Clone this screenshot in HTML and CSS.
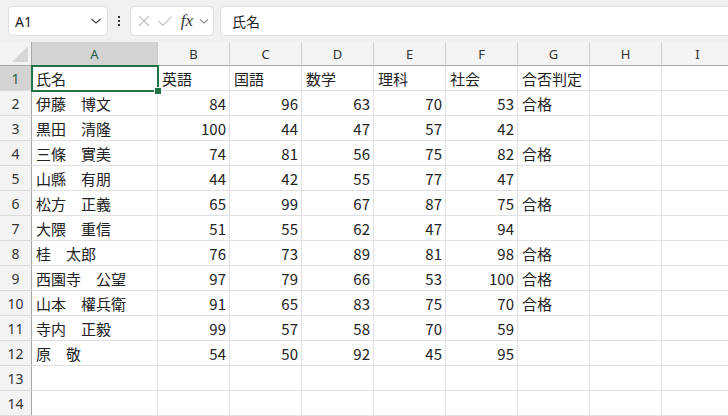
FILE: index.html
```html
<!DOCTYPE html>
<html lang="ja">

<head>
    <meta charset="UTF-8">
    <title>成績表</title>
    <link rel="stylesheet" href="styles.css">
</head>

<body>
    <!-- 数式バー -->
    <div class="formula-bar">
        <div class="name-box">
            <span>A1</span>
            <svg width="12" height="8" viewBox="0 0 12 8"><path d="M1.5 2 L6 6 L10.5 2" fill="none" stroke="#444" stroke-width="1.3"/></svg>
        </div>
        <div class="dots">
            <span></span><span></span><span></span>
        </div>
        <div class="fx-box">
            <svg width="14" height="14" viewBox="0 0 14 14"><path d="M2 2 L12 12 M12 2 L2 12" stroke="#c4c4c4" stroke-width="1.2"/></svg>
            <svg width="16" height="14" viewBox="0 0 16 14"><path d="M1.5 7 L6 11.5 L14.5 2.5" fill="none" stroke="#c4c4c4" stroke-width="1.2"/></svg>
            <span class="fx">fx</span>
            <svg width="10" height="7" viewBox="0 0 10 7"><path d="M1 1.5 L5 5 L9 1.5" fill="none" stroke="#888" stroke-width="1.1"/></svg>
        </div>
        <div class="formula-input">氏名</div>
    </div>

    <!-- シート -->
    <div class="sheet" id="sheet">
        <div class="corner"><div class="tri"></div></div>
    </div>

    <script>
        const cols = ['A', 'B', 'C', 'D', 'E', 'F', 'G', 'H', 'I'];
        const rows = [
            ['氏名', '英語', '国語', '数学', '理科', '社会', '合否判定'],
            ['伊藤　博文', 84, 96, 63, 70, 53, '合格'],
            ['黒田　清隆', 100, 44, 47, 57, 42, ''],
            ['三條　實美', 74, 81, 56, 75, 82, '合格'],
            ['山縣　有朋', 44, 42, 55, 77, 47, ''],
            ['松方　正義', 65, 99, 67, 87, 75, '合格'],
            ['大隈　重信', 51, 55, 62, 47, 94, ''],
            ['桂　太郎', 76, 73, 89, 81, 98, '合格'],
            ['西園寺　公望', 97, 79, 66, 53, 100, '合格'],
            ['山本　權兵衛', 91, 65, 83, 75, 70, '合格'],
            ['寺内　正毅', 99, 57, 58, 70, 59, ''],
            ['原　敬', 54, 50, 92, 45, 95, ''],
            [],
            []
        ];

        const sheet = document.getElementById('sheet');

        cols.forEach(c => {
            const h = document.createElement('div');
            h.className = 'col-head' + (c === 'A' ? ' active' : '');
            h.textContent = c;
            sheet.appendChild(h);
        });

        rows.forEach((r, i) => {
            const rh = document.createElement('div');
            rh.className = 'row-head' + (i === 0 ? ' active' : '');
            rh.textContent = i + 1;
            sheet.appendChild(rh);
            for (let j = 0; j < cols.length; j++) {
                const cell = document.createElement('div');
                const v = r[j];
                cell.className = 'cell' + (typeof v === 'number' ? ' num' : '');
                cell.textContent = v === undefined ? '' : v;
                sheet.appendChild(cell);
            }
        });

        const sel = document.createElement('div');
        sel.className = 'selection';
        sel.innerHTML = '<div class="handle"></div>';
        sheet.appendChild(sel);
    </script>
</body>

</html>
```

FILE: styles.css
```css
html,
body {
    margin: 0;
    height: 100%;
    overflow: hidden;
    background: #fff;
    font-family: "Noto Sans CJK JP", "Noto Sans", sans-serif;
}

.formula-bar {
    height: 42px;
    background: #f0f0f0;
    display: flex;
    align-items: center;
    padding: 0 0 0 8px;
    box-sizing: border-box;
}

.name-box {
    width: 100px;
    height: 30px;
    background: #fff;
    border: 1px solid #e0e0e0;
    border-radius: 5px;
    box-sizing: border-box;
    display: flex;
    align-items: center;
    justify-content: space-between;
    padding: 0 5px 0 6px;
    font-family: "Noto Sans", sans-serif;
    font-size: 14px;
    color: #222;
}

.dots {
    width: 22px;
    display: flex;
    flex-direction: column;
    align-items: center;
    gap: 2px;
}

.dots span {
    width: 2px;
    height: 2px;
    background: #333;
}

.fx-box {
    width: 84px;
    height: 30px;
    background: #fff;
    border: 1px solid #e0e0e0;
    border-radius: 5px;
    box-sizing: border-box;
    display: flex;
    align-items: center;
    gap: 6px;
    padding: 0 4px 0 6px;
}

.fx {
    font-family: "Liberation Serif", serif;
    font-style: italic;
    font-size: 17px;
    color: #333;
    margin-left: 2px;
}

.formula-input {
    flex: 1;
    margin-left: 6px;
    height: 30px;
    background: #fff;
    border: 1px solid #e0e0e0;
    border-right: none;
    border-radius: 5px 0 0 5px;
    box-sizing: border-box;
    display: flex;
    align-items: center;
    padding-left: 11px;
    font-size: 14px;
    color: #222;
}

.sheet {
    position: relative;
    display: grid;
    grid-template-columns: 32px 126px repeat(8, 72px);
    grid-template-rows: 24px;
    grid-auto-rows: 25px;
    font-size: 15px;
    color: #222;
}

.corner {
    background: #f3f3f3;
    border-bottom: 1px solid #a8a8a8;
    border-right: 1px solid #a8a8a8;
    box-sizing: border-box;
    position: relative;
}

.tri {
    position: absolute;
    right: 3px;
    bottom: 3px;
    width: 0;
    height: 0;
    border-left: 16px solid transparent;
    border-bottom: 16px solid #d6d6d6;
}

.col-head {
    background: #f3f3f3;
    border-bottom: 1px solid #a8a8a8;
    border-right: 1px solid #cdcdcd;
    box-sizing: border-box;
    display: flex;
    align-items: center;
    justify-content: center;
    font-family: "Noto Sans", sans-serif;
    font-size: 13px;
    color: #333;
}

.row-head {
    background: #f3f3f3;
    border-right: 1px solid #a8a8a8;
    border-bottom: 1px solid #d9d9d9;
    box-sizing: border-box;
    display: flex;
    align-items: center;
    justify-content: center;
    font-family: "Noto Sans", sans-serif;
    font-size: 14px;
    color: #333;
}

.col-head.active,
.row-head.active {
    background: #d3d3d3;
    color: #1d5c45;
}

.cell {
    border-right: 1px solid #e1e1e1;
    border-bottom: 1px solid #e1e1e1;
    box-sizing: border-box;
    padding: 0 4px;
    display: flex;
    align-items: center;
    white-space: pre;
    overflow: hidden;
}

.cell.num {
    justify-content: flex-end;
    padding-right: 3px;
}

.selection {
    position: absolute;
    left: 31px;
    top: 23px;
    width: 128px;
    height: 27px;
    border: 2px solid #217346;
    box-sizing: border-box;
}

.handle {
    position: absolute;
    right: -5px;
    bottom: -5px;
    width: 6px;
    height: 6px;
    background: #217346;
    border: 1px solid #fff;
}
```
